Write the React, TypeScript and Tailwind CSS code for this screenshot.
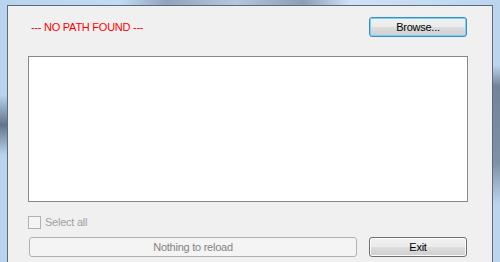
import React from "react";

export default function App() {
  const font = { fontFamily: '"Liberation Sans", Arial, sans-serif' };
  return (
    <div
      className="relative w-[500px] h-[262px] overflow-hidden bg-[linear-gradient(90deg,#b9d3ee_0%,#c6dcf3_30%,#cfe2f6_70%,#bcd5ef_100%)]"
      style={font}
    >
      {/* glass blur streaks */}
      <div className="absolute left-[120px] top-0 w-[230px] h-[6px] bg-[linear-gradient(90deg,rgba(150,165,185,0)_0%,rgba(120,140,165,0.7)_20%,rgba(160,175,195,0.5)_50%,rgba(110,130,155,0.7)_80%,rgba(150,165,185,0)_100%)]" />
      <div className="absolute left-0 top-[95px] w-[7px] h-[60px] bg-[linear-gradient(180deg,rgba(80,95,115,0)_0%,rgba(70,85,105,0.75)_50%,rgba(80,95,115,0)_100%)]" />
      <div className="absolute right-0 top-[65px] w-[7px] h-[140px] bg-[linear-gradient(180deg,rgba(90,110,130,0)_0%,rgba(100,118,138,0.85)_15%,rgba(110,128,148,0.8)_70%,rgba(90,110,130,0)_100%)]" />

      <div className="relative ml-[7px] mt-[5px] w-[486px] h-[257px] border-l border-t border-r border-[#5d6a78] bg-[#f0f0f0] pl-[20px] pr-[24px] pt-[11px] tracking-[-0.25px]">
        {/* top row */}
        <div className="flex items-center justify-between h-[20px]">
          <span className="ml-[3px] text-[11px] leading-none text-[#ff0000]">--- NO PATH FOUND ---</span>
          <button className="mr-[1px] w-[98px] h-[20px] rounded-[3px] border border-[#3c8bc4] shadow-[inset_0_0_0_1px_#6fd6f8] bg-[linear-gradient(180deg,#f2f2f2_0%,#ebebeb_48%,#dddddd_52%,#cfcfcf_100%)] text-[11px] leading-none text-black">
            Browse...
          </button>
        </div>

        {/* list box */}
        <div className="mt-[19px] w-[440px] h-[146px] border border-[#828790] bg-white" />

        {/* select all */}
        <div className="mt-[14px] flex items-center h-[13px] gap-[4px]">
          <div className="w-[13px] h-[13px] border border-[#b1b1b1] bg-[#f4f4f4]" />
          <span className="text-[11px] leading-none text-[#a0a0a0]">Select all</span>
        </div>

        {/* bottom row */}
        <div className="mt-[8px] flex items-center justify-between h-[20px]">
          <button
            disabled
            className="ml-[1px] w-[328px] h-[20px] rounded-[3px] border border-[#adb2b5] bg-[#f4f4f4] text-[11px] leading-none text-[#838383]"
          >
            Nothing to reload
          </button>
          <button className="mr-[1px] w-[98px] h-[20px] rounded-[3px] border border-[#707070] shadow-[inset_0_0_0_1px_#fcfcfc] bg-[linear-gradient(180deg,#f2f2f2_0%,#ebebeb_48%,#dddddd_52%,#cfcfcf_100%)] text-[11px] leading-none text-black">
            Exit
          </button>
        </div>
      </div>
    </div>
  );
}
